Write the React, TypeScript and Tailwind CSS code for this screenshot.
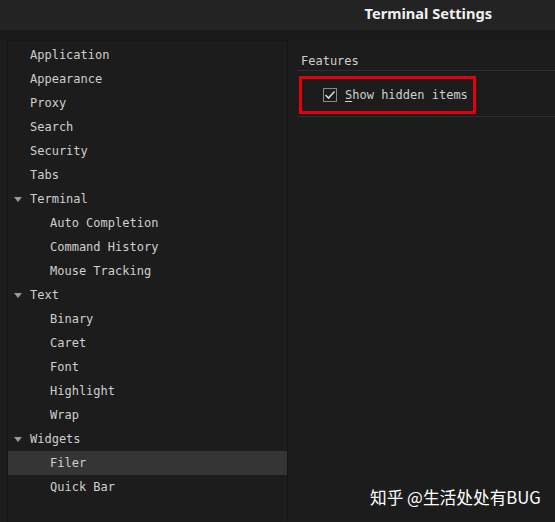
import React from "react";

type Item = { label: string; depth: 0 | 1; open?: boolean; selected?: boolean };

const items: Item[] = [
  { label: "Application", depth: 0 },
  { label: "Appearance", depth: 0 },
  { label: "Proxy", depth: 0 },
  { label: "Search", depth: 0 },
  { label: "Security", depth: 0 },
  { label: "Tabs", depth: 0 },
  { label: "Terminal", depth: 0, open: true },
  { label: "Auto Completion", depth: 1 },
  { label: "Command History", depth: 1 },
  { label: "Mouse Tracking", depth: 1 },
  { label: "Text", depth: 0, open: true },
  { label: "Binary", depth: 1 },
  { label: "Caret", depth: 1 },
  { label: "Font", depth: 1 },
  { label: "Highlight", depth: 1 },
  { label: "Wrap", depth: 1 },
  { label: "Widgets", depth: 0, open: true },
  { label: "Filer", depth: 1, selected: true },
  { label: "Quick Bar", depth: 1 },
];

const mono = "font-['DejaVu_Sans_Mono','Liberation_Mono',monospace]";

function TreeRow({ item }: { item: Item }) {
  return (
    <div className={`relative flex h-6 items-center text-[12px] text-[#cfcfcf] ${item.selected ? "bg-[#353535]" : ""}`}>
      {item.open && (
        <svg className="absolute left-[6px] top-[10px]" width="8" height="5" viewBox="0 0 8 5">
          <path d="M0 0 L8 0 L4 5 Z" fill="#9a9a9a" />
        </svg>
      )}
      <span className={item.depth === 0 ? "pl-[22px]" : "pl-[42px]"}>{item.label}</span>
    </div>
  );
}

export default function App() {
  return (
    <div className={`flex h-[522px] w-[555px] flex-col overflow-hidden bg-[#1c1c1c] ${mono}`}>
      <div className="flex h-[30px] shrink-0 items-center justify-end bg-[#232323] pb-[3px] pr-[63px]">
        <span className="font-['Noto_Sans','Open_Sans',sans-serif] text-[14.6px] font-bold text-[#f0f0f0]">Terminal Settings</span>
      </div>
      <div className="h-[10px] shrink-0 bg-[#1a1a1a]" />
      <div className="flex flex-1">
        <div className="ml-[7px] w-[281px] shrink-0 border border-r-[#141414] border-[#171717] bg-[#1c1c1c] pt-[2px]">
          {items.map((it) => (
            <TreeRow key={it.label} item={it} />
          ))}
        </div>
        <div className="ml-[9px] flex-1">
          <div className="flex h-[31px] items-center border-b border-[#2f2f2f] pl-[4px] pt-[11px] text-[12px] text-[#cfcfcf]">
            Features
          </div>
          <div className="flex h-[46px] items-start border-b border-[#2f2f2f]">
            <div className="ml-[2px] mt-[5px] flex h-[38px] w-[177px] items-center border-[3px] border-[#e3000f] pl-[21px]">
              <span className="flex h-[14px] w-[14px] items-center justify-center border border-[#8a8a8a]">
                <svg width="12" height="10" viewBox="0 0 12 10">
                  <path d="M1.5 5 L4.5 8 L10.5 1.5" stroke="#d8d8d8" strokeWidth="1.6" fill="none" />
                </svg>
              </span>
              <span className="ml-[8px] text-[12px] text-[#cfcfcf]">
                <span className="underline underline-offset-2">S</span>how hidden items
              </span>
            </div>
          </div>
          <div className="mt-[368px] pl-[73px] font-['Noto_Sans_CJK_SC',sans-serif] text-[16.7px] text-white">
            知乎 @生活处处有BUG
          </div>
        </div>
      </div>
    </div>
  );
}
